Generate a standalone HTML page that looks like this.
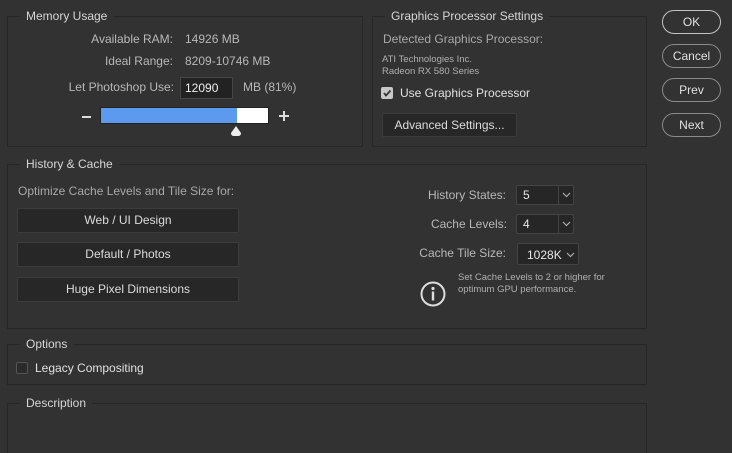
<!DOCTYPE html>
<html style="overflow:hidden;height:453px"><head><style>
*{margin:0;padding:0;box-sizing:border-box}
body{width:732px;height:453px;background:#323232;font-family:"Liberation Sans",sans-serif;font-size:12px;color:#b8b8b8;position:relative;overflow:hidden}
.a{position:absolute;white-space:nowrap}
.p{position:absolute;border:1px solid #262626}
.lg{position:absolute;background:#323232;padding:0 6px;color:#d6d6d6;font-size:12px;top:-8px;left:12px;line-height:14px}
.btn{position:absolute;background:#272727;border:1px solid #3c3c3c;border-radius:2px;color:#dcdcdc;text-align:center}
.rb{position:absolute;left:662px;width:59px;height:24px;border:1px solid #8a8a8a;border-radius:12px;color:#e0e0e0;text-align:center;line-height:22px;font-size:12px}
.dd{position:absolute;background:#262626;border:1px solid #444;border-radius:2px;color:#e6e6e6}
.r{text-align:right}
.ch{position:absolute}
</style></head><body>

<div class="p" style="left:7px;top:16px;width:356px;height:131px"><span class="lg">Memory Usage</span></div>
<div class="a r" style="right:559px;top:32px">Available RAM:</div>
<div class="a" style="left:185px;top:32px">14926 MB</div>
<div class="a r" style="right:559px;top:54px">Ideal Range:</div>
<div class="a" style="left:185px;top:54px">8209-10746 MB</div>
<div class="a r" style="right:558px;top:80px">Let Photoshop Use:</div>
<div class="a" style="left:180px;top:77px;width:53px;height:22px;background:#222;border:1px solid #474747;color:#eee;padding:3px 0 0 4px">12090</div>
<div class="a" style="left:243px;top:80px">MB (81%)</div>
<div class="a" style="left:82px;top:116px;width:9px;height:2px;background:#ddd"></div>
<div class="a" style="left:279px;top:115px;width:10px;height:2px;background:#ddd"></div>
<div class="a" style="left:283px;top:111px;width:2px;height:10px;background:#ddd"></div>
<div class="a" style="left:100px;top:107px;width:169px;height:17px;background:#fff;border:1px solid #222"></div>
<div class="a" style="left:101px;top:108px;width:136px;height:15px;background:#5b9aee"></div>
<svg class="a" style="left:230px;top:126px" width="12" height="11"><path d="M6 0 L11 7 Q11 10 8 10 L4 10 Q1 10 1 7 Z" fill="#eee"/></svg>

<div class="p" style="left:372px;top:16px;width:275px;height:131px"><span class="lg">Graphics Processor Settings</span></div>
<div class="a" style="left:383px;top:32px;color:#a8a8a8">Detected Graphics Processor:</div>
<div class="a" style="left:382px;top:54px;font-size:9.5px;line-height:12px;color:#b0b0b0">ATI Technologies Inc.<br>Radeon RX 580 Series</div>
<div class="a" style="left:381px;top:87px;width:12px;height:12px;background:#c8c8c8;border-radius:2px"></div>
<svg class="a" style="left:381px;top:87px" width="12" height="12"><path d="M3 6 L5 8.5 L9.5 3.5" stroke="#333" stroke-width="1.8" fill="none"/></svg>
<div class="a" style="left:400px;top:86px;color:#e0e0e0">Use Graphics Processor</div>
<div class="btn" style="left:382px;top:113px;width:135px;height:24px;line-height:22px">Advanced Settings...</div>

<div class="rb" style="top:10px;border-color:#c4c4c4;height:24px">OK</div>
<div class="rb" style="top:44px">Cancel</div>
<div class="rb" style="top:78px">Prev</div>
<div class="rb" style="top:113px">Next</div>

<div class="p" style="left:7px;top:164px;width:640px;height:165px"><span class="lg">History &amp; Cache</span></div>
<div class="a" style="left:18px;top:184px;color:#a8a8a8">Optimize Cache Levels and Tile Size for:</div>
<div class="btn" style="left:17px;top:208px;width:222px;height:25px;line-height:23px">Web / UI Design</div>
<div class="btn" style="left:17px;top:242px;width:222px;height:25px;line-height:23px">Default / Photos</div>
<div class="btn" style="left:17px;top:277px;width:222px;height:25px;line-height:23px">Huge Pixel Dimensions</div>

<div class="a r" style="right:226px;top:188px">History States:</div>
<div class="dd" style="left:516px;top:185px;width:58px;height:20px;padding:2px 0 0 6px">5<span style="position:absolute;left:41px;top:0;width:1px;height:18px;background:#444"></span><svg class="ch" style="left:45px;top:6px" width="9" height="6"><path d="M1 1 L4.5 4.5 L8 1" stroke="#aaa" stroke-width="1.2" fill="none"/></svg></div>
<div class="a r" style="right:225px;top:217px">Cache Levels:</div>
<div class="dd" style="left:516px;top:214px;width:58px;height:20px;padding:2px 0 0 6px">4<span style="position:absolute;left:41px;top:0;width:1px;height:18px;background:#444"></span><svg class="ch" style="left:45px;top:6px" width="9" height="6"><path d="M1 1 L4.5 4.5 L8 1" stroke="#aaa" stroke-width="1.2" fill="none"/></svg></div>
<div class="a r" style="right:226px;top:246px">Cache Tile Size:</div>
<div class="dd" style="left:517px;top:243px;width:62px;height:22px;padding:4px 0 0 9px">1028K<svg class="ch" style="left:48px;top:8px" width="9" height="6"><path d="M1 1 L4.5 4.5 L8 1" stroke="#aaa" stroke-width="1.2" fill="none"/></svg></div>
<svg class="a" style="left:420px;top:281px" width="26" height="26"><circle cx="13" cy="13" r="11.5" stroke="#ddd" stroke-width="2" fill="none"/><circle cx="13" cy="7.5" r="1.6" fill="#ddd"/><rect x="11.8" y="10.5" width="2.4" height="9" fill="#ddd"/></svg>
<div class="a" style="left:458px;top:272px;font-size:9.5px;line-height:12px;color:#b0b0b0">Set Cache Levels to 2 or higher for<br>optimum GPU performance.</div>

<div class="p" style="left:7px;top:344px;width:640px;height:41px"><span class="lg">Options</span></div>
<div class="a" style="left:16px;top:362px;width:12px;height:12px;border:1px solid #555;border-radius:2px;background:#2b2b2b"></div>
<div class="a" style="left:35px;top:361px;color:#e0e0e0">Legacy Compositing</div>

<div class="p" style="left:7px;top:403px;width:640px;height:50px;border-bottom:none"><span class="lg">Description</span></div>
</body></html>
